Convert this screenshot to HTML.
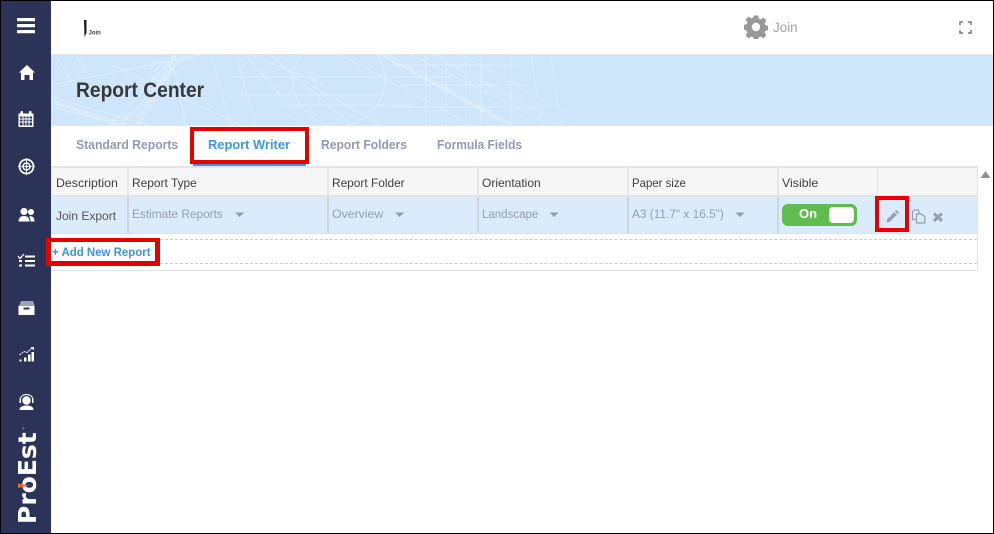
<!DOCTYPE html>
<html><head><meta charset="utf-8">
<style>
html,body{margin:0;padding:0;background:#fff}
#p{position:relative;width:994px;height:534px;overflow:hidden;background:#fff;font-family:"Liberation Sans",sans-serif;font-size:12px;color:#444}
#p div,#p span.t{position:absolute;white-space:nowrap}
.t{transform-origin:0 50%;line-height:16px}
.th{color:#3f3f3f;font-size:12px}
.td{color:#949cb4;font-size:11.5px}
.tab{font-size:13px;font-weight:bold;color:#929ab2}
.r{background:#e60000}
</style></head><body>
<div id="p">
<!-- sidebar -->
<div style="left:0;top:0;width:51px;height:534px;background:#2b3358"></div>
<!-- header -->
<div style="left:51px;top:54px;width:943px;height:1px;background:#e2e4e6"></div>
<svg style="position:absolute;left:80px;top:18px" width="24" height="20" viewBox="0 0 24 20"><path d="M6.500 2 L6.500 15 L4.500 19 L4 2Z" fill="#1c1c1c"/><text x="8.500" y="16.500" font-family="Liberation Sans" font-size="6" font-weight="bold" fill="#444">Join</text></svg>
<svg style="position:absolute;left:744px;top:15px" width="24" height="24" viewBox="0 0 24 24"><path fill="#999" fill-rule="evenodd" d="M9.800 0.500h4.400l.6 3.100 1.900.8 2.700-1.800 3 3-1.800 2.700.8 1.900 3.100.6v4.400l-3.100.6-.8 1.900 1.800 2.700-3 3-2.700-1.800-1.900.8-.6 3.100H9.800l-.6-3.100-1.900-.8-2.700 1.800-3-3 1.800-2.700-.8-1.900L-.5 14.200V9.800l3.100-.6.8-1.900L1.600 4.600l3-3 2.700 1.800 1.900-.8zM12 7.800a4.200 4.200 0 1 0 0 8.400a4.200 4.200 0 0 0 0-8.400z"/></svg>
<span class="t" style="left:773px;top:19px;font-size:14px;color:#a2a2a2;transform:scaleX(.96)">Join</span>
<svg style="position:absolute;left:959px;top:21px" width="13" height="13" viewBox="0 0 13 13"><path d="M1 4V1H4M9 1H12V4M12 9V12H9M4 12H1V9" fill="none" stroke="#777" stroke-width="1.500"/></svg>
<!-- banner -->
<div style="left:51px;top:55px;width:943px;height:70px;background:#cfe6fa;overflow:hidden">
<svg width="560" height="70" viewBox="0 0 560 70" style="position:absolute;left:0;top:0">
<g stroke="#fff" fill="none" stroke-width=".8" opacity=".38">
<path d="M0 30 L150 0M0 52 L70 70M0 47 L80 70M0 42 L95 70M5 0 L25 35M25 0 L35 18M60 10 L190 70M120 0 L135 70M160 0 L180 70M185 0 L205 70M195 0 L255 70M200 0 L275 30M220 0 L300 70M260 30 L330 70M290 0 L420 70M330 0 L460 70M360 0 L500 70M410 0 L520 60M430 0 L430 70M460 0 L460 70M480 0 L490 70M500 0 L510 70M180 22 L400 22M190 40 L330 40M230 50 L360 50M340 10 L470 10M350 30 L480 30M340 52 L500 52M375 0 L375 70M395 0 L395 70M415 0 L415 70M125 0 L60 70M135 0 L70 70"/>
<circle cx="110" cy="16" r="10"/><circle cx="110" cy="16" r="5"/><circle cx="288" cy="25" r="46"/><circle cx="81" cy="66" r="8"/>
</g>
<path d="M0 50 L60 70 L75 70 L0 44Z M122 0 L130 0 L90 70 L82 70Z M330 0 L340 0 L465 70 L452 70Z M380 0 L388 0 L518 70 L507 70Z" fill="#fff" opacity=".14"/>
</svg>
<div style="left:440px;top:0;width:130px;height:70px;background:linear-gradient(90deg,rgba(207,230,250,0),#cfe6fa 85%)"></div>
</div>
<div style="left:51px;top:125px;width:943px;height:1px;background:#dfe6ec"></div>
<span class="t" style="left:76px;top:78px;line-height:26px;font-size:21px;font-weight:bold;color:#38383c;transform:scaleX(.915)">Report Center</span>
<!-- tabs -->
<span class="t tab" style="left:76px;top:137px;transform:scaleX(.937)">Standard Reports</span>
<span class="t tab" style="left:321px;top:137px;transform:scaleX(.93)">Report Folders</span>
<span class="t tab" style="left:437px;top:137px;transform:scaleX(.92)">Formula Fields</span>
<div style="left:193px;top:163px;width:113px;height:3px;background:#3b97e3"></div>
<div class="r" style="left:190px;top:127px;width:119px;height:37px"></div>
<div style="left:194px;top:131px;width:111px;height:29px;background:#fff"></div>
<span class="t tab" style="left:208px;top:137px;color:#3b97e3;transform:scaleX(.99)">Report Writer</span>
<!-- table -->
<div style="left:52px;top:166px;width:926px;height:2px;background:#e4e4e4"></div>
<div style="left:52px;top:168px;width:926px;height:27px;background:#f6f6f6"></div>
<div style="left:52px;top:195px;width:926px;height:2px;background:#e4e4e4"></div>
<div style="left:52px;top:197px;width:926px;height:36px;background:#daecfb"></div>
<div style="left:52px;top:233px;width:926px;height:1px;background:#dfe3e6"></div>
<div style="left:51px;top:166px;width:1px;height:105px;background:#e4e4e4"></div>
<div style="left:977px;top:166px;width:1px;height:105px;background:#e4e4e4"></div>
<div style="left:127px;top:167px;width:2px;height:28px;background:#e8e8e8"></div>
<div style="left:327px;top:167px;width:2px;height:28px;background:#e8e8e8"></div>
<div style="left:477px;top:167px;width:2px;height:28px;background:#e8e8e8"></div>
<div style="left:627px;top:167px;width:2px;height:28px;background:#e8e8e8"></div>
<div style="left:777px;top:167px;width:2px;height:28px;background:#e8e8e8"></div>
<div style="left:877px;top:167px;width:1px;height:28px;background:#e2e2e2"></div>
<div style="left:127px;top:197px;width:2px;height:36px;background:#cfd5db"></div>
<div style="left:327px;top:197px;width:2px;height:36px;background:#cfd5db"></div>
<div style="left:477px;top:197px;width:2px;height:36px;background:#cfd5db"></div>
<div style="left:627px;top:197px;width:2px;height:36px;background:#cfd5db"></div>
<div style="left:777px;top:197px;width:2px;height:36px;background:#cfd5db"></div>
<span class="t th" style="left:56px;top:175px;transform:scaleX(1.03)">Description</span>
<span class="t th" style="left:132px;top:175px;transform:scaleX(.995)">Report Type</span>
<span class="t th" style="left:332px;top:175px;transform:scaleX(.99)">Report Folder</span>
<span class="t th" style="left:482px;top:175px;transform:scaleX(1)">Orientation</span>
<span class="t th" style="left:632px;top:175px;transform:scaleX(.95)">Paper size</span>
<span class="t th" style="left:782px;top:175px;transform:scaleX(1.03)">Visible</span>
<span class="t" style="left:56px;top:208px;font-size:12px;color:#555;transform:scaleX(1)">Join Export</span>
<span class="t td" style="left:132px;top:207px;transform:scaleX(1.03)">Estimate Reports</span>
<span class="t td" style="left:332px;top:207px;transform:scaleX(1.07)">Overview</span>
<span class="t td" style="left:482px;top:207px;transform:scaleX(1)">Landscape</span>
<span class="t td" style="left:632px;top:207px;transform:scaleX(1.03)">A3 (11.7" x 16.5")</span>
<svg style="position:absolute;left:0;top:0" width="994" height="534">
<path fill="#949cb4" d="M235 212.500h9l-4.500 4.500zM395 212.500h9l-4.500 4.500zM549.500 212.500h9l-4.500 4.500zM735.500 212.500h9l-4.500 4.500z"/>
</svg>
<!-- toggle -->
<div style="left:782px;top:204px;width:75px;height:22px;background:#61bc4f;border-radius:6px"></div>
<div style="left:829px;top:207px;width:25px;height:16px;background:#fff;border-radius:4px"></div>
<span class="t" style="left:799px;top:206px;font-size:13px;font-weight:bold;color:#fff">On</span>
<!-- edit box -->
<div class="r" style="left:875px;top:196px;width:34px;height:36px"></div>
<div style="left:879px;top:200px;width:26px;height:28px;background:#daecfb"></div>
<svg style="position:absolute;left:886px;top:209px" width="14" height="14" viewBox="0 0 14 14"><path fill="#969eb6" d="M10.300 1 L13 3.700 L11.700 5 L9 2.300ZM8.200 3.100 L10.900 5.800 L3.500 13 L0.800 13.200 L1 10.500Z"/></svg>
<svg style="position:absolute;left:911px;top:209px" width="15" height="15" viewBox="0 0 15 15"><path fill="none" stroke="#969eb6" stroke-width="1.200" d="M5 10.500H1.500V2.500L4 .8H7.500L8 4.500M5.500 5H10L13.800 7.500V14H5.500Z"/></svg>
<svg style="position:absolute;left:932px;top:211px" width="12" height="12" viewBox="0 0 12 12"><path stroke="#969eb6" stroke-width="3" d="M2 2.500L10 10M10 2.500L2 10"/></svg>
<!-- add row -->
<div style="left:160px;top:239px;width:817px;border-top:1px dashed #c6ccd3"></div>
<div style="left:160px;top:263px;width:817px;border-top:1px dashed #c6ccd3"></div>
<div style="left:51px;top:270px;width:927px;height:1px;background:#e2e2e2"></div>
<div class="r" style="left:46px;top:238px;width:114px;height:28px"></div>
<div style="left:51px;top:242px;width:104px;height:19px;background:#fff"></div>
<span class="t" style="left:52px;top:244px;font-size:12px;font-weight:bold;color:#3f93dc;transform:scaleX(.955)">+ Add New Report</span>
<!-- scroll arrow -->
<svg style="position:absolute;left:980px;top:170px" width="11" height="9"><path d="M.5 8 L5.500 1 L10.500 8Z" fill="#8f8f8f"/></svg>
<!-- side icons -->
<svg style="position:absolute;left:0;top:0" width="51" height="534" fill="#fff">
<rect x="17" y="18" width="18" height="3.200" rx=".5"/><rect x="17" y="24" width="18" height="3.200" rx=".5"/><rect x="17" y="30" width="18" height="3.200" rx=".5"/>
<path d="M27 65 L35 72.500 H33 V80 H29.500 V75 H24.500 V80 H21 V72.500 H19Z"/>
<path fill-rule="evenodd" d="M18.500 113.500H33.500V127H18.500ZM20 116V125.500H32V116Z"/>
<rect x="20.500" y="111" width="2.500" height="4.500" rx="1"/><rect x="29" y="111" width="2.500" height="4.500" rx="1"/>
<path fill="#fff" d="M18.500 113.500h15v3H18.500z"/>
<path stroke="#fff" stroke-width="1" d="M20 119H32M20 122H32M23 116V126M26 116V126M29 116V126"/>
<g fill="none" stroke="#fff"><circle cx="26.500" cy="166.500" r="7" stroke-width="1.800"/><circle cx="26.500" cy="166.500" r="3.500" stroke-width="1.500"/><path d="M26.500 158V175M18 166.500H35" stroke-width=".8"/></g><circle cx="26.500" cy="166.500" r="1.200"/>
<circle cx="24" cy="211.500" r="3.600"/><circle cx="31" cy="212" r="3"/><path d="M18.500 221.500C18.500 217.500 21 216 24 216C27 216 29.500 217.500 29.500 221.500Z"/><path d="M30.500 221.500C30.500 219 30 217.500 29 216.500C32 215.500 34.500 217 34.500 221.500Z"/>
<path d="M18 256L20 258.500L24 254" fill="none" stroke="#fff" stroke-width="1.300"/><rect x="25" y="255.500" width="10" height="2"/><rect x="19" y="260" width="3" height="2"/><rect x="25" y="260" width="10" height="2"/><rect x="19" y="264.500" width="3" height="2"/><rect x="25" y="264.500" width="10" height="2"/>
<path opacity=".55" d="M21 301H33L34.500 305H19.500Z"/><path fill-rule="evenodd" d="M18.500 305.500H34.500V315H18.500ZM23.500 307.500V309.500H29.500V307.500Z"/>
<path d="M19.500 359.500h2v2h-2zM24 357.500h2.500v4H24zM28 354.500h2.500v7H28zM31.500 352h2.500v9.500h-2.500z"/><path d="M19.500 355L24 351.500L27 352.500L32.500 347.500" fill="none" stroke="#fff" stroke-width="1" stroke-dasharray="2 .7"/><path d="M30.500 347h3.500v3.500z"/>
<circle cx="26.500" cy="400.500" r="4.200"/><path d="M20 400.500C20 392.500 33 392.500 33 400.500" fill="none" stroke="#fff" stroke-width="1.100"/><path d="M19.500 410C19.500 406.500 23 405.500 26.500 405.500C30 405.500 33.500 406.500 33.500 410Z"/><rect x="19.500" y="399" width="1.500" height="4"/><rect x="32" y="399" width="1.500" height="4"/>
<!-- logo -->
<text transform="translate(36,524) rotate(-90)" font-family="DejaVu Sans" font-weight="bold" font-size="25" fill="#fff">ProEst</text>
<path d="M18 483.500 L29.500 485.500 L18 488Z" fill="#e8681c"/>
<circle cx="23.500" cy="428.500" r="1" fill="#8a90a8"/>
</svg>
<!-- outer border -->
<div style="left:0;top:0;width:992px;height:532px;border:1px solid #000"></div>
</div>
</body></html>
